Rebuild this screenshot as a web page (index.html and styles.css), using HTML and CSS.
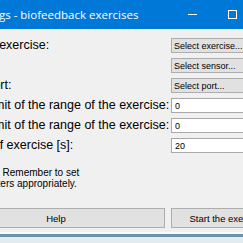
FILE: index.html
```html
<html>

<head>
  <meta charset="utf-8" />
  <title>Settings - biofeedback exercises</title>
  <link rel="stylesheet" href="styles.css">
</head>

<body>
  <div class="window">
    <div class="titlebar">
      <div class="title-text">Settings - biofeedback exercises</div>
      <div class="caption-btn"><span class="min-glyph"></span></div>
      <div class="caption-btn"><span class="max-glyph"></span></div>
      <div class="caption-btn">
        <svg width="10" height="10" viewBox="0 0 10 10"><path d="M0 0L10 10M10 0L0 10" stroke="#fff" stroke-width="1" /></svg>
      </div>
    </div>

    <div class="content">
      <div class="form">
        <div class="lbl">Training exercise:</div>
        <button class="pick">Select exercise...</button>

        <div class="lbl"></div>
        <button class="pick">Select sensor...</button>

        <div class="lbl">Serial port:</div>
        <button class="pick">Select port...</button>

        <div class="lbl">Lower limit of the range of the exercise:</div>
        <input class="field" type="text" value="0" />

        <div class="lbl">Upper limit of the range of the exercise:</div>
        <input class="field" type="text" value="0" />

        <div class="lbl">Length of exercise [s]:</div>
        <input class="field" type="text" value="20" />
      </div>

      <div class="note">Information: Remember to set<br />the parameters appropriately.</div>

      <div class="actions">
        <button class="act">Help</button>
        <button class="act">Start the exercise</button>
      </div>
    </div>
  </div>

  <div class="edge-light"></div>
  <div class="edge-line"></div>
</body>

</html>
```

FILE: styles.css
```css
body {
  margin: 0;
  width: 243px;
  height: 243px;
  overflow: hidden;
  background-color: #e2ebf0;
  font-family: "Liberation Sans", Arial, sans-serif;
}

.window {
  margin-left: -63px;
  width: 355px;
  background-color: #f0f0f0;
}

.titlebar {
  height: 29px;
  background-color: #0078d7;
  display: flex;
  align-items: center;
  color: white;
}

.title-text {
  flex: 1;
  padding-left: 31px;
  font-family: "Open Sans", "Noto Sans", sans-serif;
  font-size: 11.5px;
  white-space: nowrap;
}

.caption-btn {
  width: 40px;
  height: 29px;
  display: flex;
  align-items: center;
  justify-content: center;
}

.min-glyph {
  width: 9px;
  height: 1px;
  background-color: #fff;
}

.max-glyph {
  width: 7px;
  height: 7px;
  border: 1px solid #fff;
}

.content {
  height: 203px;
  box-sizing: border-box;
  padding: 9px 10px 4px 10px;
  display: flex;
  flex-direction: column;
}

.form {
  display: grid;
  grid-template-columns: 218px 1fr;
  column-gap: 6px;
  row-gap: 5px;
}

.lbl {
  padding-left: 4px;
  font-size: 12.5px;
  line-height: 15px;
  white-space: nowrap;
  color: #000;
}

.pick {
  height: 15px;
  margin: 0;
  padding: 0 2px;
  border: 1px solid #adadad;
  background-color: #e1e1e1;
  font-family: "Liberation Sans", Arial, sans-serif;
  font-size: 9px;
  text-align: left;
  color: #000;
}

.field {
  height: 15px;
  margin: 0;
  padding: 0 3px;
  box-sizing: border-box;
  border: 1px solid #a9a9a9;
  background-color: #fff;
  font-family: "Liberation Sans", Arial, sans-serif;
  font-size: 9px;
  color: #000;
}

.note {
  margin-top: 14px;
  font-size: 10px;
  line-height: 11px;
  white-space: nowrap;
}

.actions {
  margin-top: auto;
  display: grid;
  grid-template-columns: 218px 1fr;
  column-gap: 6px;
}

.act {
  height: 20px;
  margin: 0;
  border: 1px solid #adadad;
  background-color: #e1e1e1;
  font-family: "Liberation Sans", Arial, sans-serif;
  font-size: 9.5px;
  color: #000;
}

.edge-light {
  height: 2px;
  background-color: #f8fbfc;
}

.edge-line {
  height: 3px;
  background-color: #6f90aa;
}
```
